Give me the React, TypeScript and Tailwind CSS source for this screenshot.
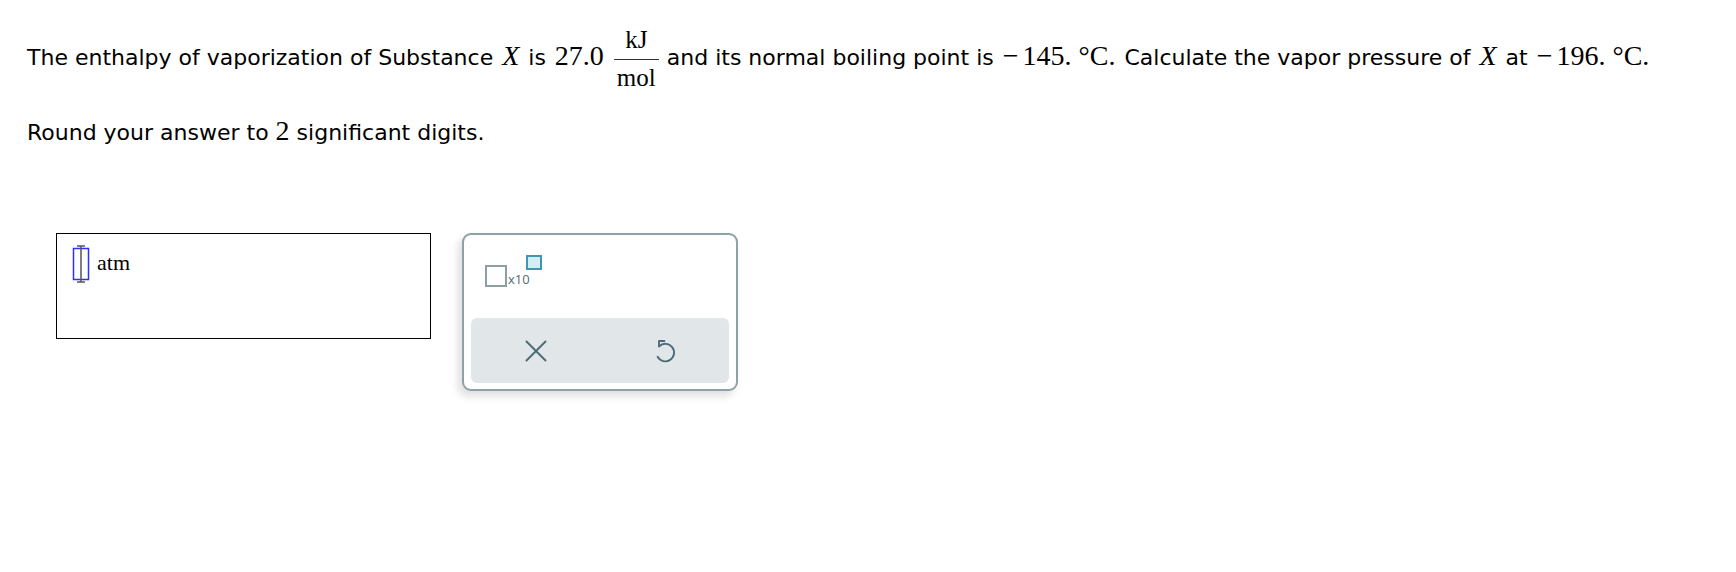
import { X } from 'lucide-react';

function Frac({ num, den }: { num: string; den: string }) {
    return (
        <span className="inline-flex flex-col items-center align-middle mx-[8px] font-['Liberation_Serif',serif] text-[25px] leading-none">
            <span className="px-[3px] pb-[7px]">{num}</span>
            <span className="self-stretch border-t-[1.5px] border-[#333]" />
            <span className="px-[3px] pt-[5px]">{den}</span>
        </span>
    );
}

function Serif({ children, italic, spaced }: { children: React.ReactNode; italic?: boolean; spaced?: boolean }) {
    return (
        <span className={`font-['Liberation_Serif',serif] text-[28px] ${italic ? 'italic' : ''} ${spaced ? 'mx-[2px]' : ''}`}>
            {children}
        </span>
    );
}

function Neg({ value }: { value: string }) {
    return (
        <Serif spaced>
            <span className="mr-[4px]">−</span>
            {value}
        </Serif>
    );
}

function CursorGlyph() {
    return (
        <svg width="18" height="40" viewBox="0 0 18 40" className="shrink-0">
            <rect x="1.5" y="4.5" width="15" height="31" fill="none" stroke="#2f2fff" strokeWidth="1.5" />
            <line x1="9" y1="2" x2="9" y2="38" stroke="#555" strokeWidth="1.5" />
            <line x1="5" y1="2" x2="13" y2="2" stroke="#555" strokeWidth="1.5" />
            <line x1="5" y1="38" x2="13" y2="38" stroke="#555" strokeWidth="1.5" />
        </svg>
    );
}

function UndoIcon() {
    return (
        <svg width="30" height="30" viewBox="0 0 24 24" fill="none" stroke="#4e6b75" strokeWidth="1.5" strokeLinecap="round" strokeLinejoin="round">
            <path d="M11.5 4H7.2v4.3" />
            <path d="M7.4 8.2A7 7 0 1 1 6.1 16.6" />
        </svg>
    );
}

export default function App() {
    return (
        <div className="w-[1736px] h-[572px] bg-white text-black font-['DejaVu_Sans','Verdana',sans-serif] pl-[27px] pt-[27px]">
            <p className="text-[22px] leading-[30px] whitespace-nowrap">
                The enthalpy of vaporization of Substance <Serif italic spaced>X</Serif> is <Serif spaced>27.0</Serif>
                <Frac num="kJ" den="mol" />
                and its normal boiling point is <Neg value="145. °C." /> Calculate the vapor pressure of{' '}
                <Serif italic spaced>X</Serif> at <Neg value="196. °C." />
            </p>

            <p className="mt-[26px] text-[22px] leading-[30px]">
                Round your answer to <Serif>2</Serif> significant digits.
            </p>

            <div className="mt-[85px] flex items-start gap-[31px] pl-[29px]">
                <div className="w-[375px] h-[106px] border-[1.5px] border-black flex items-start pl-[15px] pt-[10px] gap-[7px]">
                    <CursorGlyph />
                    <span className="font-['Liberation_Serif',serif] text-[22px] leading-none mt-[8px]">atm</span>
                </div>

                <div className="w-[276px] h-[158px] rounded-[9px] border-2 border-[#8ea1a9] bg-white shadow-[-4px_5px_8px_rgba(0,0,0,0.13)] flex flex-col px-[7px] pb-[6px]">
                    <div className="flex-1 flex items-start pl-[14px] pt-[20px]">
                        <div className="flex items-end">
                            <span className="w-[22px] h-[22px] border-2 border-[#8c9ea6] bg-white mt-[10px]" />
                            <span className="text-[13px] leading-none text-[#4e6b75] font-['Open_Sans',sans-serif] ml-[1px] mb-[1px]">x10</span>
                            <span className="w-[16px] h-[15px] border-2 border-[#3b97b3] bg-[#d4edf5] self-start -ml-[4px]" />
                        </div>
                    </div>
                    <div className="h-[65px] rounded-[6px] bg-[#e1e6e9] grid grid-cols-2 items-center">
                        <div className="flex justify-center">
                            <X size={38} strokeWidth={1.2} color="#4e6b75" />
                        </div>
                        <div className="flex justify-center">
                            <UndoIcon />
                        </div>
                    </div>
                </div>
            </div>
        </div>
    );
}
